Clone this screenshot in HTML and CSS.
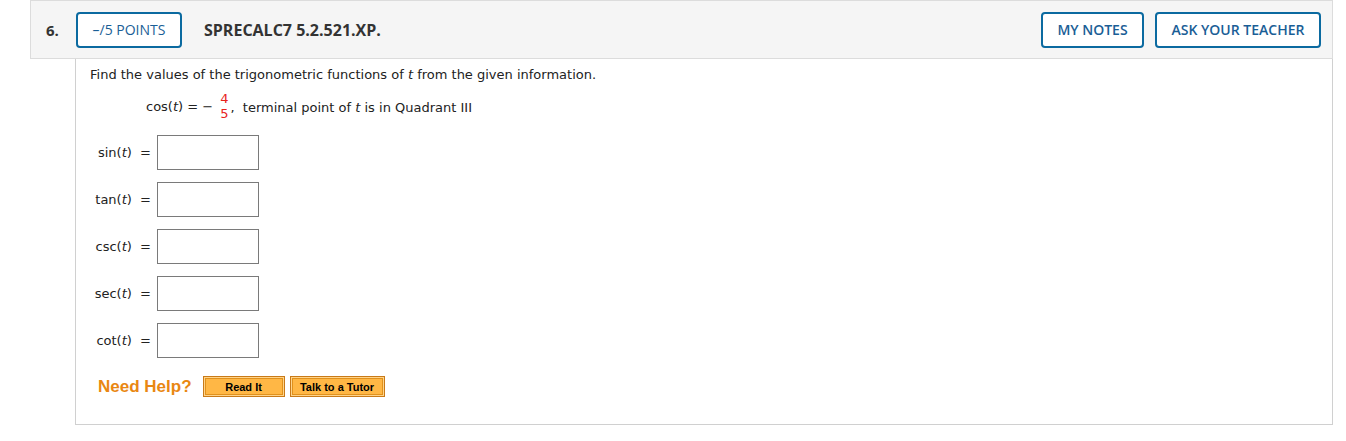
FILE: index.html
```html
<!DOCTYPE html>
<html>
<head>
<meta charset="utf-8">
<link rel="stylesheet" href="styles.css">
</head>
<body>
<div class="question">
  <div class="qhead">
    <span class="qnum">6.</span>
    <span class="btn points">–/5 POINTS</span>
    <span class="qref">SPRECALC7 5.2.521.XP.</span>
    <span class="spacer"></span>
    <span class="btn notes">MY NOTES</span>
    <span class="btn ask">ASK YOUR TEACHER</span>
  </div>
  <div class="qbody">
    <p class="prompt">Find the values of the trigonometric functions of <i>t</i> from the given information.</p>
    <div class="given">
      <span>cos(<i>t</i>) = −</span>
      <span class="frac"><span class="num">4</span><span class="den">5</span></span><span class="rest">,&nbsp; terminal point of <i>t</i> is in Quadrant III</span>
    </div>
    <div class="answers">
      <div class="row"><span class="lbl">sin(<i>t</i>) &nbsp;=</span><span class="box"></span></div>
      <div class="row"><span class="lbl">tan(<i>t</i>) &nbsp;=</span><span class="box"></span></div>
      <div class="row"><span class="lbl">csc(<i>t</i>) &nbsp;=</span><span class="box"></span></div>
      <div class="row"><span class="lbl">sec(<i>t</i>) &nbsp;=</span><span class="box"></span></div>
      <div class="row"><span class="lbl">cot(<i>t</i>) &nbsp;=</span><span class="box"></span></div>
    </div>
    <div class="help">
      <span class="needhelp">Need Help?</span>
      <span class="hbtn read">Read It</span>
      <span class="hbtn tutor">Talk to a Tutor</span>
    </div>
  </div>
</div>
</body>
</html>
```
FILE: styles.css
```css
html, body { margin: 0; padding: 0; background: #fff; }
body { padding: 0 13px 0 30px; }
.question { width: 1303px; }
.qhead {
  display: flex;
  align-items: center;
  height: 59px;
  box-sizing: border-box;
  background: #f5f5f5;
  border: 1px solid #dcdcdc;
  padding: 0 11px 0 15px;
  font-family: "Open Sans", sans-serif;
}
.qnum { font-weight: bold; font-size: 15px; color: #333; width: 30px; }
.btn {
  display: inline-flex; align-items: center; justify-content: center;
  height: 36px; box-sizing: border-box;
  border: 2px solid #0b6aa0; border-radius: 4px;
  color: #1a5e96; font-size: 14px; background: #fff;
  font-weight: 600;
}
.points { width: 106px; font-weight: normal; }
.qref { margin-left: 22px; font-weight: bold; font-size: 16px; color: #333; }
.spacer { flex: 1; }
.notes { width: 103px; }
.ask { width: 166px; margin-left: 11px; }
.qbody {
  margin-left: 45px;
  border-left: 1px solid #d0d0d0;
  border-right: 1px solid #d0d0d0;
  border-bottom: 1px solid #d0d0d0;
  height: 366px;
  box-sizing: border-box;
  padding: 7px 0 0 14px;
  font-family: "DejaVu Sans", Verdana, sans-serif;
  font-size: 13px;
  color: #222;
}
.prompt { margin: 0; line-height: 17px; }
.given { margin: 9px 0 0 56px; display: flex; align-items: center; }
.frac { display: inline-flex; flex-direction: column; align-items: center; color: #e8231c; font-size: 13px; line-height: 14px; margin: 0 0 0 6px; }
.frac .num { padding: 0 1px 1px; }
.rest { margin-left: 1px; padding-top: 1px; }
.answers { margin-top: 14px; }
.row { display: flex; align-items: center; height: 35px; margin-bottom: 12px; }
.lbl { width: 61px; text-align: right; margin-right: 6px; }
.box { width: 102px; height: 35px; box-sizing: border-box; border: 1px solid #7a7a7a; background: #fff; }
.help { display: flex; align-items: center; margin: 18px 0 0 8px; }
.needhelp { font-family: "Liberation Sans", Arial, sans-serif; font-weight: bold; font-size: 17px; color: #e98712; margin-right: 11px; }
.hbtn {
  display: inline-flex; align-items: center; justify-content: center;
  height: 21px; box-sizing: border-box;
  border: 1px solid #c97a18;
  box-shadow: inset 0 0 0 1px #ffd48a, inset 0 0 0 2px #e0911d;
  background: #ffb745;
  font-family: "Liberation Sans", Arial, sans-serif; font-weight: bold; font-size: 11px; color: #000;
}
.read { width: 82px; margin-right: 5px; }
.tutor { width: 95px; }
```
